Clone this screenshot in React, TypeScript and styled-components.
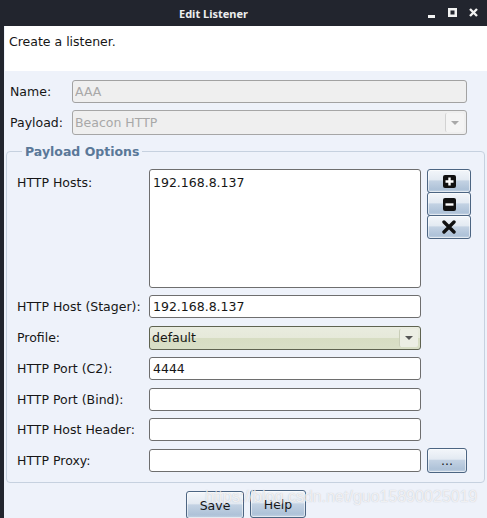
import React from 'react';
import styled, { createGlobalStyle } from 'styled-components';

const GlobalStyle = createGlobalStyle`
  html, body {
    margin: 0;
    padding: 0;
    background: #eef2fa;
  }
  * {
    box-sizing: border-box;
  }
`;

const Window = styled.div`
  position: relative;
  width: 487px;
  height: 518px;
  overflow: hidden;
  display: flex;
  flex-direction: column;
  background: #eef2fa;
  font-family: 'DejaVu Sans', sans-serif;
  font-size: 12.5px;
  color: #161616;
`;

const TitleBar = styled.div`
  height: 26px;
  flex: none;
  display: flex;
  align-items: center;
  background: #22252e;
`;

const TitleText = styled.div`
  flex: 1;
  text-align: center;
  font-family: 'Noto Sans', sans-serif;
  font-weight: 700;
  font-size: 11px;
  color: #eeeeee;
`;

const Controls = styled.div`
  width: 60px;
  display: flex;
  align-items: center;
  gap: 12px;
`;

const Body = styled.div`
  flex: 1;
  display: flex;
  flex-direction: column;
  border-left: 4px solid #22252e;
  padding-left: 1px;
`;

const Header = styled.div`
  height: 45px;
  background: #ffffff;
  padding: 8px 4px;
  line-height: 15px;
`;

const TopGrid = styled.div`
  display: grid;
  grid-template-columns: 62px 395px;
  row-gap: 7px;
  padding: 9px 0 0 5px;
  align-items: center;
`;

const Label = styled.label`
  white-space: nowrap;
`;

const TextField = styled.input`
  height: 23px;
  width: 100%;
  border: 1px solid #6e6e6e;
  border-radius: 3px;
  background: #ffffff;
  padding: 0 3px;
  font-family: 'DejaVu Sans', sans-serif;
  font-size: 12.5px;
  color: #161616;
  outline: none;
  &:disabled {
    background: #efefef;
    border-color: #a2a2a2;
    color: #a8a8a8;
    padding: 0 2px;
  }
`;

const Combo = styled.div<{ $disabled?: boolean }>`
  height: ${(p) => (p.$disabled ? 25 : 24)}px;
  display: flex;
  align-items: center;
  border: 1px solid ${(p) => (p.$disabled ? '#a6a6a6' : '#5f6350')};
  border-radius: 3px;
  background: ${(p) =>
    p.$disabled
      ? '#efefef'
      : 'linear-gradient(#e9ecdf 0%, #e6e9da 48%, #d7ddc3 52%, #d9dfc7 100%)'};
  color: ${(p) => (p.$disabled ? '#a8a8a8' : '#161616')};
  padding-left: 2px;
`;

const ComboText = styled.span`
  flex: 1;
`;

const ComboArrow = styled.div<{ $disabled?: boolean }>`
  width: 19px;
  height: calc(100% - 4px);
  margin-right: 2px;
  display: flex;
  align-items: center;
  justify-content: center;
  border-left: 1px solid ${(p) => (p.$disabled ? '#d2d2d2' : '#c9ceb8')};
  border-radius: 2px;
  background: ${(p) => (p.$disabled ? '#f4f4f4' : '#eceee4')};
  &::after {
    content: '';
    border-left: 4px solid transparent;
    border-right: 4px solid transparent;
    border-top: 4px solid ${(p) => (p.$disabled ? '#a8a8a8' : '#555555')};
  }
`;

const Group = styled.fieldset`
  margin: 9px 2px 0 1px;
  padding: 10px 10px 9px 10px;
  border: 1px solid #c6d1df;
  border-radius: 4px;
  min-width: 0;
`;

const Legend = styled.legend`
  margin-left: 5px;
  padding: 0 3px;
  font-weight: 700;
  font-size: 12.5px;
  line-height: 15px;
  color: #5a7898;
`;

const OptionsGrid = styled.div`
  display: grid;
  grid-template-columns: 126px 272px 44px;
  column-gap: 6px;
  row-gap: 7.4px;
  align-items: center;
`;

const TopLabel = styled(Label)`
  align-self: start;
  padding-top: 6px;
`;

const HostArea = styled.textarea`
  height: 119px;
  width: 100%;
  resize: none;
  border: 1px solid #6e6e6e;
  border-radius: 3px;
  background: #ffffff;
  padding: 5px 3px;
  font-family: 'DejaVu Sans', sans-serif;
  font-size: 12.5px;
  line-height: 15px;
  color: #161616;
  outline: none;
`;

const ButtonStack = styled.div`
  align-self: start;
  display: flex;
  flex-direction: column;
`;

const GlossButton = styled.button<{ $w?: number; $h?: number }>`
  width: ${(p) => (p.$w ? `${p.$w}px` : '100%')};
  height: ${(p) => p.$h ?? 24}px;
  display: flex;
  align-items: center;
  justify-content: center;
  padding: 0;
  border: 1px solid #4c6582;
  border-radius: 3px;
  background: linear-gradient(
    #f3f6fa 0%,
    #e3eaf2 44%,
    #c3d2e3 50%,
    #aec2d8 88%,
    #c4d3e3 100%
  );
  box-shadow: inset 0 0 0 1px rgba(255, 255, 255, 0.55);
  font-family: 'DejaVu Sans', sans-serif;
  font-size: 12.5px;
  color: #161616;
  cursor: pointer;
  & + & {
    margin-top: -1px;
  }
`;

const Footer = styled.div`
  display: flex;
  justify-content: center;
  gap: 6px;
  padding: 8px 0 0 0;
  & > button + button {
    margin-top: 0;
  }
`;

const Watermark = styled.div`
  position: absolute;
  left: 205px;
  top: 488px;
  font-family: 'Liberation Sans', Arial, sans-serif;
  font-size: 16px;
  color: rgba(255, 255, 255, 0.75);
  text-shadow: 0 0 1px rgba(90, 90, 100, 0.35);
  pointer-events: none;
  white-space: nowrap;
`;

function WinMin() {
  return (
    <svg width="9" height="12" viewBox="0 0 9 12">
      <rect x="1" y="8" width="7" height="3" fill="#f2f2f2" />
    </svg>
  );
}

function WinMax() {
  return (
    <svg width="9" height="12" viewBox="0 0 9 12">
      <rect x="1.25" y="2.25" width="6.5" height="6.5" fill="none" stroke="#f2f2f2" strokeWidth="2.5" />
    </svg>
  );
}

function WinClose() {
  return (
    <svg width="9" height="12" viewBox="0 0 9 12">
      <path d="M1 2 L8 9 M8 2 L1 9" stroke="#f2f2f2" strokeWidth="2.4" />
    </svg>
  );
}

function PlusIcon() {
  return (
    <svg width="13" height="13" viewBox="0 0 13 13">
      <rect x="0" y="0" width="13" height="13" rx="2" fill="#111" />
      <path d="M6.5 2.5 V10.5 M2.5 6.5 H10.5" stroke="#fff" strokeWidth="2.4" />
    </svg>
  );
}

function MinusIcon() {
  return (
    <svg width="13" height="13" viewBox="0 0 13 13">
      <rect x="0" y="0" width="13" height="13" rx="2" fill="#111" />
      <path d="M2.5 6.5 H10.5" stroke="#fff" strokeWidth="2.4" />
    </svg>
  );
}

function RemoveIcon() {
  return (
    <svg width="14" height="14" viewBox="0 0 14 14">
      <path d="M2 2 L12 12 M12 2 L2 12" stroke="#111" strokeWidth="3.4" strokeLinecap="round" />
    </svg>
  );
}

const fields = [
  { label: 'HTTP Port (C2):', value: '4444' },
  { label: 'HTTP Port (Bind):', value: '' },
  { label: 'HTTP Host Header:', value: '' },
];

export default function App() {
  return (
    <Window>
      <GlobalStyle />
      <TitleBar>
        <TitleText>Edit Listener</TitleText>
        <Controls>
          <WinMin />
          <WinMax />
          <WinClose />
        </Controls>
      </TitleBar>
      <Body>
        <Header>Create a listener.</Header>
        <TopGrid>
          <Label>Name:</Label>
          <TextField disabled defaultValue="AAA" />
          <Label>Payload:</Label>
          <Combo $disabled>
            <ComboText>Beacon HTTP</ComboText>
            <ComboArrow $disabled />
          </Combo>
        </TopGrid>
        <Group>
          <Legend>Payload Options</Legend>
          <OptionsGrid>
            <TopLabel>HTTP Hosts:</TopLabel>
            <HostArea defaultValue="192.168.8.137" />
            <ButtonStack>
              <GlossButton><PlusIcon /></GlossButton>
              <GlossButton><MinusIcon /></GlossButton>
              <GlossButton><RemoveIcon /></GlossButton>
            </ButtonStack>

            <Label>HTTP Host (Stager):</Label>
            <TextField defaultValue="192.168.8.137" />
            <span />

            <Label>Profile:</Label>
            <Combo>
              <ComboText>default</ComboText>
              <ComboArrow />
            </Combo>
            <span />

            {fields.map((f) => (
              <React.Fragment key={f.label}>
                <Label>{f.label}</Label>
                <TextField defaultValue={f.value} />
                <span />
              </React.Fragment>
            ))}

            <Label>HTTP Proxy:</Label>
            <TextField defaultValue="" />
            <GlossButton $w={40} $h={25}>...</GlossButton>
          </OptionsGrid>
        </Group>
        <Footer>
          <GlossButton $w={58} $h={28}>Save</GlossButton>
          <GlossButton $w={56} $h={28}>Help</GlossButton>
        </Footer>
      </Body>
      <Watermark>https://blog.csdn.net/guo15890025019</Watermark>
    </Window>
  );
}
